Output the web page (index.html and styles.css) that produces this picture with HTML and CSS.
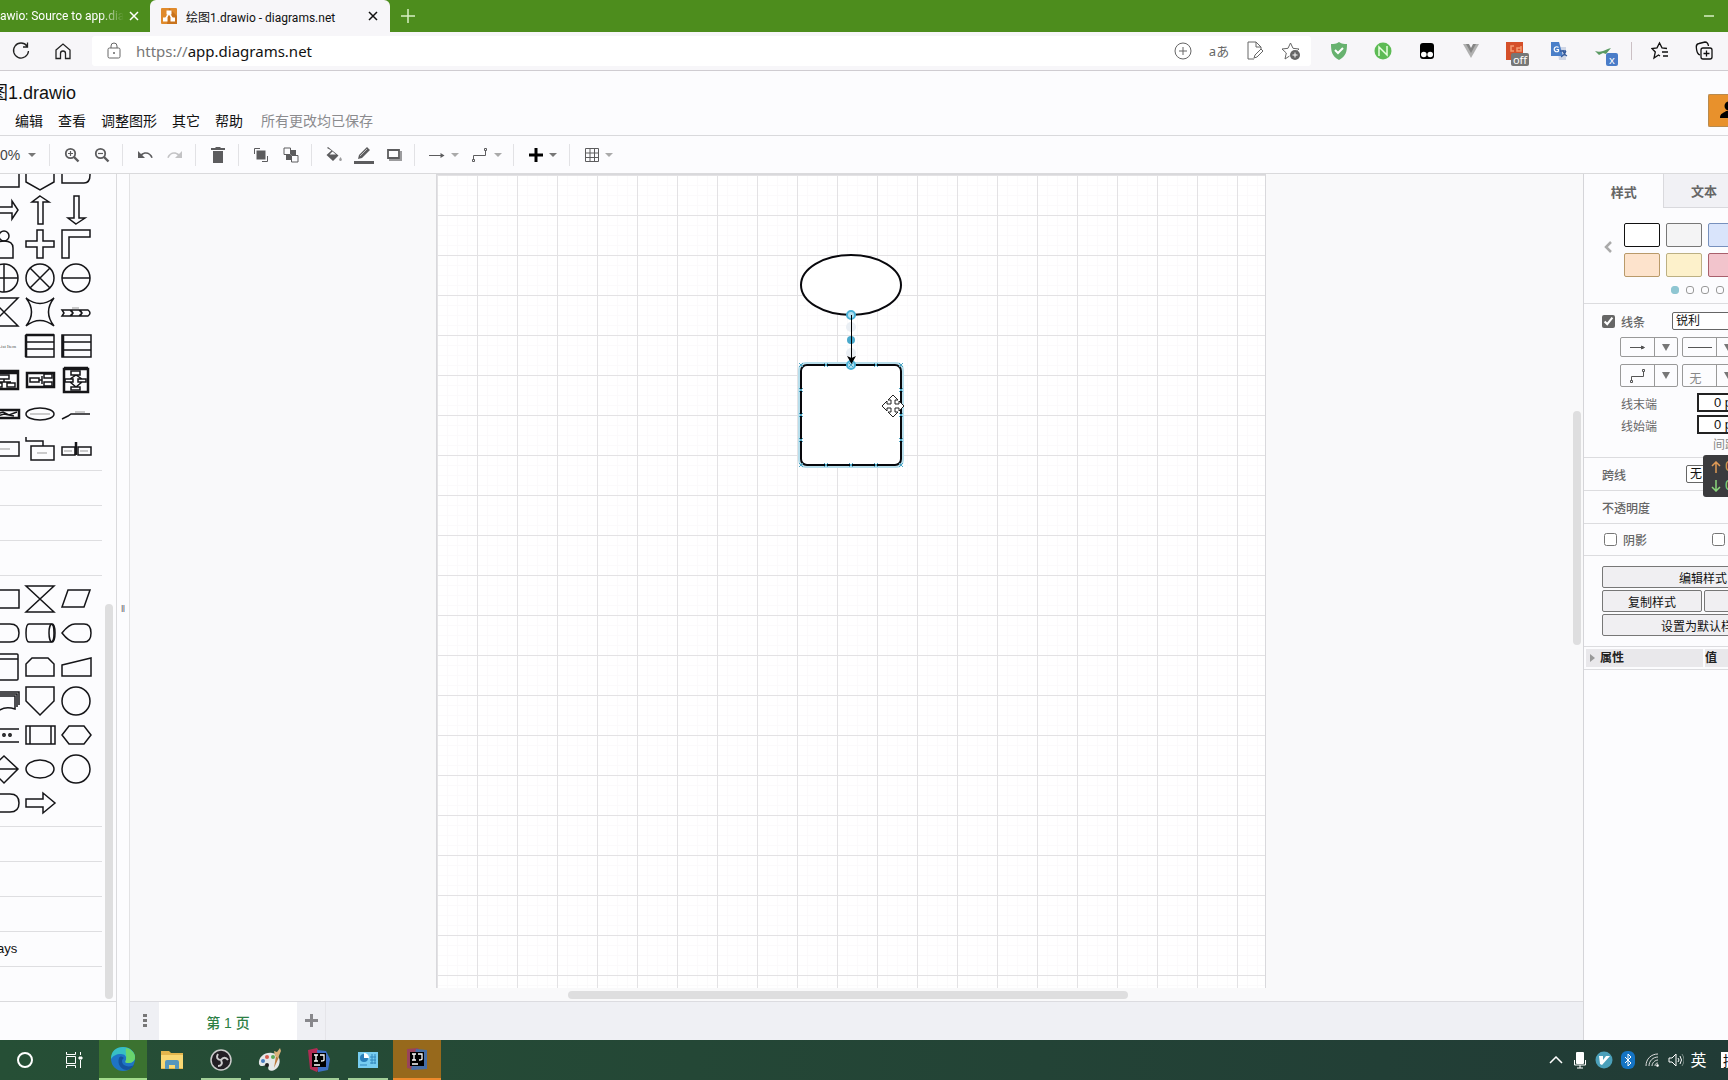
FILE: index.html
```html
<!DOCTYPE html>
<html lang="zh-CN">
<head>
    <meta charset="UTF-8">
    <meta name="viewport" content="width=device-width, initial-scale=1.0">
    <title>绘图1.drawio - diagrams.net</title>
    <link rel="stylesheet" href="styles.css">
</head>
<body>
    <!-- Browser tabs -->
    <div class="tab-strip">
        <div class="tab tab-old">
            <span class="tab-title">awio: Source to app.dia</span>
            <button class="tab-close" aria-label="Close tab"><svg width="10" height="10" viewBox="0 0 10 10"><path d="M1 1l8 8M9 1l-8 8"/></svg></button>
        </div>
        <div class="tab tab-current">
            <svg class="favicon" width="16" height="16" viewBox="0 0 16 16"><rect width="16" height="16" rx="1" fill="#e08a2c"/><path d="M8 0l8 8v8H6z" fill="#c9731d"/><path d="M8 5L4.500 11M8 5l3.500 6" stroke="#fff" stroke-width="1.500"/><path d="M5.500 2.500h5v4h-5zM2 9.500h4.500v4H2zM9.500 9.500H14v4H9.500z" fill="#fff"/></svg>
            <span class="tab-title">绘图1.drawio - diagrams.net</span>
            <button class="tab-close" aria-label="Close tab"><svg width="10" height="10" viewBox="0 0 10 10"><path d="M1 1l8 8M9 1l-8 8"/></svg></button>
        </div>
        <button class="tab-new" aria-label="New tab"><svg width="14" height="14" viewBox="0 0 14 14"><path d="M7 0v14M0 7h14"/></svg></button>
        <button class="minimize" aria-label="Minimize"><svg width="10" height="10" viewBox="0 0 10 10"><path d="M0 5h10"/></svg></button>
    </div>

    <!-- Address bar -->
    <div class="address-bar">
        <button class="nav-btn" aria-label="Reload"><svg width="20" height="20" viewBox="0 0 20 20"><path d="M16 5A7.500 7.500 0 1 0 17.500 10M16.500 1.500V6H12"/></svg></button>
        <button class="nav-btn" aria-label="Home"><svg width="18" height="18" viewBox="0 0 18 18"><path d="M2 8l7-6 7 6v8.500h-4.500V11.500a2.500 2.500 0 0 0-5 0v5H2z"/></svg></button>
        <div class="url-field">
            <svg width="14" height="18" viewBox="0 0 14 18"><rect x="1" y="6" width="12" height="10" rx="1.500"/><path d="M4 6V4a3 3 0 0 1 6 0v2"/><circle cx="7" cy="11" r="1" fill="#666" stroke="none"/></svg>
            <a class="url" href="#"><span>https://</span>app.diagrams.net</a>
            <button class="field-btn" aria-label="Zoom"><svg width="18" height="18" viewBox="0 0 18 18"><circle cx="9" cy="9" r="8"/><path d="M9 5v8M5 9h8"/></svg></button>
            <button class="field-btn read">aあ</button>
            <button class="field-btn" aria-label="Edit page"><svg width="18" height="20" viewBox="0 0 18 20"><path d="M8 18H2V1h8l5 5v2M10 1v5h5M8 17l1-3 6-6 2 2-6 6z"/></svg></button>
            <button class="field-btn" aria-label="Add favourite"><svg width="20" height="20" viewBox="0 0 20 20"><path d="M8.500 15L4 18l1.300-6L1 8l6-.700L9.500 2 12 7.300l6 .700-1.500 1.500"/><circle cx="14" cy="14" r="5" fill="#666" stroke="none"/><path d="M14 11.500v5M11.500 14h5" stroke="#fff"/></svg></button>
        </div>
        <div class="extensions">
            <button class="ext" aria-label="Shield"><svg width="18" height="20" viewBox="0 0 18 20"><path d="M9 1c3 2 5 2 8 2 0 8-1 12-8 16C2 15 1 11 1 3c3 0 5 0 8-2z" fill="#67b26f"/><path d="M5 9l3 3 5-5" fill="none" stroke="#fff" stroke-width="2"/></svg></button>
            <button class="ext" aria-label="N"><svg width="18" height="18" viewBox="0 0 18 18"><circle cx="9" cy="9" r="8.500" fill="#5dbb55"/><path d="M5 14V5l8 8V4" fill="none" stroke="#e8ffe0" stroke-width="1.500"/></svg></button>
            <button class="ext" aria-label="Script"><svg width="16" height="16" viewBox="0 0 16 16"><rect x="1" width="14" height="16" rx="3"/><circle cx="4.800" cy="11.500" r="2.800" fill="#fff"/><circle cx="11.200" cy="11.500" r="2.800" fill="#fff"/></svg></button>
            <button class="ext" aria-label="V"><svg width="16" height="16" viewBox="0 0 16 16"><path d="M0 1h16L8 15z" fill="#b0b0b0"/><path d="M3 1h10L8 10z" fill="#858585"/><path d="M6 1h4L8 5z" fill="#f7f6f9"/></svg></button>
            <button class="ext" aria-label="Blocker"><svg width="18" height="18" viewBox="0 0 18 18"><rect width="17" height="18" fill="#d5502a"/><path d="M8 4H5v5h3M15 4v5h-4V6h4" fill="none" stroke="#f49b72" stroke-width="1.500"/></svg><span class="badge badge-off">off</span></button>
            <button class="ext" aria-label="Translate"><svg width="18" height="18" viewBox="0 0 18 18"><path d="M7 5h9v13H9z" fill="#cfd6e6"/><path d="M1 0h8l4 14H1z" fill="#4a7fc9"/><path d="M8.500 5.500a2.500 2.500 0 1 0 0 3.500V7.500H6.500" fill="none" stroke="#fff" stroke-width="1.200"/><path d="M10 9h6M13 8v1c1 3 2 4 4 5m-1-5c-1 3-3 5-5 6" fill="none" stroke="#345a9c" stroke-width="1.300"/></svg></button>
            <button class="ext" aria-label="Glasses"><svg width="18" height="18" viewBox="0 0 18 18"><path d="M1 9c3 1 5 1 8 0 3-1 4-2 8-3l-5 6-3-1-4 2z" fill="#5a9a63"/></svg><span class="badge badge-x">x</span></button>
            <span class="ext-line"></span>
            <button class="ext dark" aria-label="Favourites"><svg width="18" height="20" viewBox="0 0 18 20"><path d="M9 15l-1.500-1L3 17l1.300-6L1 7.500l5-.700L8.500 2 11 6.800l5 .700M11 11h6M12 15h5"/></svg></button>
            <button class="ext dark" aria-label="Collections"><svg width="18" height="20" viewBox="0 0 18 20"><path d="M5 14c-3-1-3-3-3.500-6S1 3 4 2.500L10 1c2 0 3 1 3.500 4"/><rect x="6" y="7" width="11" height="11" rx="2"/><path d="M11.500 9.500v6M8.500 12.500h6"/></svg></button>
        </div>
    </div>

    <!-- Document title and menus -->
    <header class="header">
        <div class="doc">
            <h1 class="doc-title">图1.drawio</h1>
            <nav class="menus">
                <a href="#">编辑</a>
                <a href="#">查看</a>
                <a href="#">调整图形</a>
                <a href="#">其它</a>
                <a href="#">帮助</a>
                <span class="saved">所有更改均已保存</span>
            </nav>
        </div>
        <button class="share" aria-label="Share"><svg width="20" height="20" viewBox="0 0 20 20"><circle cx="10" cy="6" r="4.500"/><path d="M1 18c0-5 4-5 6-7h6c2 2 6 2 6 7z"/></svg></button>
    </header>

    <div class="toolbar">
        <button class="zoom-level">0%<i class="caret"></i></button>
        <span class="sep"></span>
        <button class="tool" aria-label="Zoom in"><svg width="16" height="16" viewBox="0 0 16 16"><g class="line"><circle cx="6.500" cy="6.500" r="4.700"/><path d="M10 10l4.500 4.500" stroke-width="2.400"/><path d="M6.500 4v5M4 6.500h5" stroke-width="1.200"/></g></svg></button>
        <button class="tool" aria-label="Zoom out"><svg width="16" height="16" viewBox="0 0 16 16"><g class="line"><circle cx="6.500" cy="6.500" r="4.700"/><path d="M10 10l4.500 4.500" stroke-width="2.400"/><path d="M4 6.500h5" stroke-width="1.200"/></g></svg></button>
        <span class="sep"></span>
        <button class="tool" aria-label="Undo"><svg width="16" height="16" viewBox="0 0 16 16"><path d="M1 4v7h7L5.300 8.300C9 5.500 12.500 7 14.300 11l1.500-.6C14 5.500 8.500 3.500 4 7z"/></svg></button>
        <button class="tool disabled" aria-label="Redo"><svg width="16" height="16" viewBox="0 0 16 16"><path d="M15 4v7H8l2.700-2.700C7 5.500 3.500 7 1.700 11l-1.500-.6C2 5.500 7.500 3.500 12 7z"/></svg></button>
        <span class="sep"></span>
        <button class="tool" aria-label="Delete"><svg width="16" height="16" viewBox="0 0 16 16"><path d="M1 1h4l1-1h4l1 1h4v2H1zM3 4h10v12H3z"/></svg></button>
        <span class="sep"></span>
        <button class="tool" aria-label="To front"><svg width="16" height="16" viewBox="0 0 16 16"><path d="M3.500 3.500h9v9h-9z"/><path class="thin" d="M1.500 7V1.500H7M14.500 9v5.500H9"/></svg></button>
        <button class="tool" aria-label="To back"><svg width="16" height="16" viewBox="0 0 16 16"><path d="M8 3h5v5H8zM3 8h5v5H3z"/><path class="thin" d="M1 1h6.500v6.500H1zM8.500 8.500H15V15H8.500z"/></svg></button>
        <span class="sep"></span>
        <button class="tool" aria-label="Fill colour"><svg width="18" height="16" viewBox="0 0 18 16"><path d="M3 0l10.500 8.500L8 14 1.500 8l5-4.500L2 1zM7.500 4.500L4.500 7.500h6.500z" fill-rule="evenodd"/><path d="M15.500 10c3 4 0 4 0 4s-3 0 0-4z" opacity=".6"/></svg></button>
        <button class="tool" aria-label="Line colour"><svg width="20" height="18" viewBox="0 0 20 18"><path d="M0 15h20v3H0zM4 13l1-4 8-8 3 3-8 8z"/><path d="M6 10l7-7" stroke="#fff" stroke-width=".6"/></svg></button>
        <button class="tool" aria-label="Shadow"><svg width="16" height="16" viewBox="0 0 16 16"><path d="M14 4h2v10H3v-2h11z" opacity=".6"/><path class="line" d="M2 3h11v8H2z"/></svg></button>
        <span class="sep"></span>
        <button class="tool menu" aria-label="Connection"><svg width="16" height="16" viewBox="0 0 16 16"><path class="thin" d="M0 8.500h15"/><path d="M11.500 6l4 2.500-4 2.500z"/></svg><i class="caret light"></i></button>
        <button class="tool menu" aria-label="Waypoints"><svg width="16" height="16" viewBox="0 0 16 16"><path class="thin" d="M1.500 12V8.500h12V4M0.500 12.500h2v2h-2zM12.500 1.500h2v2h-2z"/></svg><i class="caret light"></i></button>
        <span class="sep"></span>
        <button class="tool menu" aria-label="Insert"><svg width="14" height="14" viewBox="0 0 14 14"><path d="M5.500 0h3v5.500H14v3H8.500V14h-3V8.500H0v-3h5.500z" fill="#000"/></svg><i class="caret"></i></button>
        <span class="sep"></span>
        <button class="tool menu" aria-label="Table"><svg width="14" height="14" viewBox="0 0 14 14"><path class="thin" d="M.5.5h13v13H.5zM5 .5v13M9.500.5v13M.5 5h13M.5 9.500h13"/></svg><i class="caret light"></i></button>
    </div>

    <main class="main">
        <!-- Shape library -->
        <aside class="sidebar">
            <div class="library">
                <div class="palette palette-general">
                    <button class="shape"><svg viewBox="0 0 36 34"><path d="M4 8h29v20H4z"/></svg></button>
                    <button class="shape"><svg viewBox="0 0 36 34"><path d="M4 8h28v15l-14 8-14-8z"/></svg></button>
                    <button class="shape"><svg viewBox="0 0 36 34"><path d="M4 4h28v12q0 8-6 8H4z"/></svg></button>
                    <button class="shape"><svg viewBox="0 0 36 34"><path d="M4 14h22V8l6 9-6 9v-6H4z"/></svg></button>
                    <button class="shape"><svg viewBox="0 0 36 34"><path d="M18 3l9 6h-6v22h-5V9h-6z"/></svg></button>
                    <button class="shape"><svg viewBox="0 0 36 34"><path d="M18 31l9-6h-6V3h-5v22h-6z"/></svg></button>
                    <button class="shape"><svg viewBox="0 0 36 34"><circle cx="18" cy="9" r="5"/><path d="M9 31V21q0-7 9-7t9 7v10z"/></svg></button>
                    <button class="shape"><svg viewBox="0 0 36 34"><path d="M15 3h6v11h11v6H21v11h-6V20H4v-6h11z"/></svg></button>
                    <button class="shape"><svg viewBox="0 0 36 34"><path d="M4 3h28v7H11v21H4z"/></svg></button>
                    <button class="shape"><svg viewBox="0 0 36 34"><circle cx="18" cy="17" r="14"/><path d="M18 3v28M4 17h28"/></svg></button>
                    <button class="shape"><svg viewBox="0 0 36 34"><circle cx="18" cy="17" r="14"/><path d="M8 7l20 20M28 7L8 27"/></svg></button>
                    <button class="shape"><svg viewBox="0 0 36 34"><circle cx="18" cy="17" r="14"/><path d="M4 17h28"/></svg></button>
                    <button class="shape"><svg viewBox="0 0 36 34"><path d="M4 3h28L4 31h28z"/></svg></button>
                    <button class="shape"><svg viewBox="0 0 36 34"><path d="M4 3q14 11 28 0-11 14 0 28-14-11-28 0 11-14 0-28z"/></svg></button>
                    <button class="shape"><svg viewBox="0 0 36 34"><path d="M4 15h8l3 3-3 3H4l2-3zM13 15h8l3 3-3 3h-8l2-3zM22 15h8q4 3 0 6h-8l2-3z"/><path class="faint" d="M14 13h7"/></svg></button>
                    <button class="shape"><svg viewBox="0 0 36 34"><text x="12" y="19">List Item</text></svg></button>
                    <button class="shape"><svg viewBox="0 0 36 34"><path d="M4 6h28v22H4zM4 13h28M4 20h28" /><path class="bold" d="M4 6h28M4 6v22"/></svg></button>
                    <button class="shape"><svg viewBox="0 0 36 34"><path d="M4 6h29v22H4zM4 13h29M4 21h29"/><path class="bold" d="M5 6v22"/></svg></button>
                    <button class="shape"><svg viewBox="0 0 36 34"><path class="bold" d="M3 8h29v18H3zM3 10h29"/><path d="M13 12h10v4H13zM8 20h8v4H8zM21 20h8v4h-8zM18 16v3M11 19h14"/></svg></button>
                    <button class="shape"><svg viewBox="0 0 36 34"><path class="bold" d="M5 10h27v14H5z"/><path d="M8 15h9v4H8zM22 11h8v4h-8zM22 19h8v4h-8zM17 17h3M20 13v8"/></svg></button>
                    <button class="shape"><svg viewBox="0 0 36 34"><path class="bold" d="M6 6h24v23H6zM6 5h24"/><path d="M13 8h9v4h-9zM7 16h8v3H7zM20 16h8v3h-8zM13 24h9v3h-9zM18 12l-6 4M18 12l6 4M12 19l6 5M24 19l-6 5"/></svg></button>
                    <button class="shape"><svg viewBox="0 0 36 34"><path class="bold" d="M3 13h30v8H3z"/><path d="M3 17h8l6-2 6 3 8-3M12 19l6-2 10 2"/></svg></button>
                    <button class="shape"><svg viewBox="0 0 36 34"><ellipse cx="18" cy="17" rx="14" ry="6"/><path class="faint" d="M8 17h20"/></svg></button>
                    <button class="shape"><svg viewBox="0 0 36 34"><path d="M4 22l6-3 3-2h19"/><path class="faint" d="M17 15h10"/></svg></button>
                    <button class="shape"><svg viewBox="0 0 36 34"><path d="M4 11h29v14H4z"/><path class="faint" d="M13 18h11"/></svg></button>
                    <button class="shape"><svg viewBox="0 0 36 34"><path d="M4 6v4h17v5M9 15h23v14H9z"/><path class="faint" d="M15 22h10"/></svg></button>
                    <button class="shape"><svg viewBox="0 0 36 34"><path d="M4 16h13v8H4zM20 16h13v8H20z"/><path class="bold" d="M18 11v13"/><path class="faint" d="M6 20h8M22 20h8"/></svg></button>
                </div>
                <div class="section"></div>
                <div class="section"></div>
                <div class="section"></div>
                <div class="palette">
                    <button class="shape"><svg viewBox="0 0 36 34"><path d="M4 8h29v18H4z"/></svg></button>
                    <button class="shape"><svg viewBox="0 0 36 34"><path d="M4 4h28L4 30h28z"/></svg></button>
                    <button class="shape"><svg viewBox="0 0 36 34"><path d="M10 8h22l-6 17H4z"/></svg></button>
                    <button class="shape"><svg viewBox="0 0 36 34"><path d="M10 8h14q9 0 9 9t-9 9H10z"/></svg></button>
                    <button class="shape"><svg viewBox="0 0 36 34"><path d="M7 8h22q3 0 3 9t-3 9H7q-3 0-3-9t3-9z"/><ellipse cx="30" cy="17" rx="3" ry="9"/></svg></button>
                    <button class="shape"><svg viewBox="0 0 36 34"><path d="M4 17q7-9 13-9h9q7 0 7 9t-7 9h-9q-6 0-13-9z"/></svg></button>
                    <button class="shape"><svg viewBox="0 0 36 34"><rect x="4" y="4" width="28" height="26" rx="1"/><path d="M4 9h28"/></svg></button>
                    <button class="shape"><svg viewBox="0 0 36 34"><path d="M4 26V14l6-6h16l6 6v12z"/></svg></button>
                    <button class="shape"><svg viewBox="0 0 36 34"><path d="M4 15l29-7v18H4z"/></svg></button>
                    <button class="shape"><svg viewBox="0 0 36 34"><path d="M2 12h27v13q-9-3-15 1H2zM4 10h27v13M6 8h27v13"/></svg></button>
                    <button class="shape"><svg viewBox="0 0 36 34"><path d="M4 3h28v14l-14 14L4 17z"/></svg></button>
                    <button class="shape"><svg viewBox="0 0 36 34"><circle cx="18" cy="17" r="14"/></svg></button>
                    <button class="shape"><svg viewBox="0 0 36 34"><path d="M4 11h29M4 24h29"/><circle cx="18" cy="17" r="1.200"/><circle cx="24" cy="17" r="1.200"/></svg></button>
                    <button class="shape"><svg viewBox="0 0 36 34"><path d="M4 8h29v18H4zM8 8v18M29 8v18"/></svg></button>
                    <button class="shape"><svg viewBox="0 0 36 34"><path d="M4 17l7-9h15l7 9-7 9H11z"/></svg></button>
                    <button class="shape"><svg viewBox="0 0 36 34"><path d="M18 4l14 13-14 14L4 17zM4 17h28"/></svg></button>
                    <button class="shape"><svg viewBox="0 0 36 34"><ellipse cx="18" cy="17" rx="14" ry="9"/></svg></button>
                    <button class="shape"><svg viewBox="0 0 36 34"><circle cx="18" cy="17" r="14"/></svg></button>
                    <button class="shape"><svg viewBox="0 0 36 34"><path d="M10 8h14q9 0 9 9t-9 9H10z"/></svg></button>
                    <button class="shape"><svg viewBox="0 0 36 34"><path d="M4 13h17V7l12 10-12 10v-6H4z"/></svg></button>
                </div>
                <div class="section"></div>
                <div class="section"></div>
                <div class="section"></div>
                <div class="section">ays</div>
                <span class="scroll-thumb side-thumb"></span>
            </div>
            <div class="library-footer"></div>
        </aside>
        <div class="splitter">||</div>

        <!-- Drawing area -->
        <section class="editor">
            <div class="canvas">
                <div class="page">
                    <svg class="diagram" viewBox="1 1 830 814">
                        <rect class="glow" x="365" y="191" width="100" height="100" rx="5"/>
                        <ellipse class="node" cx="415" cy="111" rx="50" ry="30"/>
                        <rect class="node" x="365" y="191" width="100" height="100" rx="6"/>
                        <circle class="handle-faint" cx="415" cy="153" r="5"/>
                        <circle class="handle-faint" cx="415" cy="179" r="5"/>
                        <circle class="handle-end" cx="415" cy="141" r="4"/>
                        <circle class="handle-end" cx="415" cy="191" r="4"/>
                        <circle class="handle" cx="415" cy="166" r="4"/>
                        <path class="edge" d="M415.500 141v46"/>
                        <path d="M411 182l4.500 2 4.500-2-4.500 8z"/>
                        <path class="points" d="M363 189l4 4m0-4l-4 4M388 189l4 4m0-4l-4 4M413 189l4 4m0-4l-4 4M438 189l4 4m0-4l-4 4M463 189l4 4m0-4l-4 4M363 214l4 4m0-4l-4 4M463 214l4 4m0-4l-4 4M363 239l4 4m0-4l-4 4M463 239l4 4m0-4l-4 4M363 264l4 4m0-4l-4 4M463 264l4 4m0-4l-4 4M363 289l4 4m0-4l-4 4M388 289l4 4m0-4l-4 4M413 289l4 4m0-4l-4 4M438 289l4 4m0-4l-4 4M463 289l4 4m0-4l-4 4"/>
                        <path class="cursor" d="M457 221l5 5h-3v4h4v-3l5 5-5 5v-3h-4v4h3l-5 5-5-5h3v-4h-4v3l-5-5 5-5v3h4v-4h-3z"/>
                    </svg>
                </div>
                <span class="scroll-thumb canvas-v"></span>
                <span class="scroll-thumb canvas-h"></span>
            </div>
            <div class="page-tabs">
                <button class="pages-menu" aria-label="Pages"><svg width="4" height="14" viewBox="0 0 4 14"><path d="M0 0h4v3H0zM0 5h4v3H0zM0 10h4v3H0z"/></svg></button>
                <button class="page-tab">第 1 页</button>
                <button class="page-add" aria-label="Add page"><svg width="13" height="13" viewBox="0 0 13 13"><path d="M5 0h3v5h5v3H8v5H5V8H0V5h5z"/></svg></button>
            </div>
        </section>

        <!-- Format panel -->
        <aside class="format">
            <div class="format-inner">
                <div class="format-tabs">
                    <button class="format-tab selected">样式</button>
                    <button class="format-tab">文本</button>
                    <button class="format-tab"></button>
                </div>
                <div class="block presets">
                    <button class="prev" aria-label="Previous"><svg width="8" height="12" viewBox="0 0 8 12"><path d="M7 1L2 6l5 5"/></svg></button>
                    <div class="swatches">
                        <button class="swatch white"></button>
                        <button class="swatch grey"></button>
                        <button class="swatch blue"></button>
                        <button class="swatch orange"></button>
                        <button class="swatch yellow"></button>
                        <button class="swatch red"></button>
                    </div>
                    <div class="dots"><i class="on"></i><i></i><i></i><i></i></div>
                </div>
                <div class="block line-block">
                    <div class="row line-head">
                        <input type="checkbox" id="line" checked>
                        <label for="line">线条</label>
                        <select class="sharp" aria-label="Line style"><option>锐利</option></select>
                    </div>
                    <div class="row pair">
                        <button class="combo"><span><svg width="16" height="9" viewBox="0 0 16 9"><path d="M0 4.500h14M11.500 3L14.500 4.500 11.500 6z"/></svg></span><i></i></button>
                        <button class="combo"><span><svg width="24" height="9" viewBox="0 0 24 9"><path d="M0 4.500h24"/></svg></span><i></i></button>
                    </div>
                    <div class="row pair tall">
                        <button class="combo"><span><svg width="16" height="16" viewBox="0 0 16 16"><path d="M1.500 12V8.500h12V4M.5 12.500h2v2h-2zM12.500 1.500h2v2h-2z" fill="none"/></svg></span><i></i></button>
                        <button class="combo"><span class="none">无</span><i></i></button>
                    </div>
                    <div class="row end-row"><label for="line-end">线末端</label><input type="text" id="line-end" value="0 pt"></div>
                    <div class="row end-row"><label for="line-start">线始端</label><input type="text" id="line-start" value="0 pt"></div>
                    <div class="spacing">间距</div>
                </div>
                <div class="block row jump"><label for="jump">跨线</label><select id="jump"><option>无</option></select></div>
                <div class="block row opacity">不透明度</div>
                <div class="block row effects">
                    <input type="checkbox" id="shadow"><label for="shadow">阴影</label>
                    <input type="checkbox" id="sketch" aria-label="Sketch">
                </div>
                <div class="block actions">
                    <button class="wide">编辑样式</button>
                    <button>复制样式</button>
                    <button></button>
                    <button class="wide">设置为默认样式</button>
                </div>
                <table class="props">
                    <tr><th class="name"><i></i>属性</th><th>值</th></tr>
                </table>
            </div>
            <div class="net-speed">
                <span class="up"><svg width="10" height="12" viewBox="0 0 10 12"><path d="M5 12V1M1 5l4-4 4 4"/></svg>0</span>
                <span class="down"><svg width="10" height="12" viewBox="0 0 10 12"><path d="M5 0v11M1 7l4 4 4-4"/></svg>0</span>
            </div>
        </aside>
    </main>

    <!-- Windows taskbar -->
    <footer class="taskbar">
        <button class="task" aria-label="Cortana"><svg width="18" height="18" viewBox="0 0 18 18"><circle cx="9" cy="9" r="7" fill="none" stroke="#fff" stroke-width="2"/></svg></button>
        <button class="task" aria-label="Task view"><svg width="18" height="16" viewBox="0 0 18 16" fill="none" stroke="#fff"><path d="M1.500 0v2.500h9V0M1.500 16v-2.500h9V16M1.500 4.500h9v7h-9zM15.500 0v3M15.500 8v8"/><path d="M14 5h3v2h-3z" fill="#fff"/></svg></button>
        <button class="task focused" aria-label="Edge"><svg width="24" height="24" viewBox="0 0 24 24"><circle cx="12" cy="12" r="12" fill="#1e74c5"/><path d="M0 12C0 4 5 0 12 0c7 0 12 5 12 10 0 4-3 6-7 6-3 0-3-1-2-3 1-3-1-6-5-6-5 0-8 2-10 5z" fill="#37bfc4"/><path d="M15 1c5 1 9 5 9 9 0 4-3 6-7 6-3 0-3-1-2-3 1-4-1-8 0-12z" fill="#69d56c"/><path d="M8 11c-2 6 2 12 8 12 3 0 6-3 7-5-5 3-12 1-12-4 0-2 2-3 2-3-2-2-4-2-5 0z" fill="#15539e"/></svg></button>
        <button class="task" aria-label="Explorer"><svg width="22" height="18" viewBox="0 0 22 18"><path d="M0 0h8l2 2h12v16H0z" fill="#e3b64d"/><path d="M0 4h22v13H0z" fill="#f9d873"/><path d="M4 18v-7q0-2 2-2h10q2 0 2 2v7h-4v-4H8v4z" fill="#5596bd"/></svg></button>
        <button class="task open" aria-label="OBS"><svg width="22" height="22" viewBox="0 0 22 22"><circle cx="11" cy="11" r="10" fill="#231f24" stroke="#ccc" stroke-width="1.500"/><path d="M11 11c-4 0-5-3-3-6M11 11c2-3 5-3 7 0M11 11c2 4 0 6-3 6" fill="none" stroke="#ccc" stroke-width="2"/></svg></button>
        <button class="task open" aria-label="Paint"><svg width="24" height="24" viewBox="0 0 24 24"><path d="M1 16C0 9 7 4 14 5s9 7 7 12-8 7-10 5 1-5-2-5-6 3-8-1z" fill="#e4e7e8"/><circle cx="5" cy="13" r="2" fill="#477dc0"/><circle cx="9" cy="9" r="2" fill="#d65d4e"/><circle cx="15" cy="9" r="2" fill="#5ba95a"/><circle cx="9" cy="17" r="2" fill="#222"/><path d="M16 20l2-12 3 1z" fill="#bd7b3d"/><path d="M17 8l-1-5 3 1 3-4 1 3-3 7z" fill="#d9b17a"/></svg></button>
        <button class="task open" aria-label="IntelliJ IDEA"><svg width="24" height="24" viewBox="0 0 24 24"><path d="M1 2l9-2 6 10-6 14-7-3z" fill="#b02c54"/><path d="M10 2l9 1 4 8-2 11-10 2z" fill="#3d6fc4"/><path d="M5 5h14v14H5z"/><path d="M7 7h4M9 7v6M7 13h4M13 7h4v5q0 1-3 1M7 17h6" fill="none" stroke="#fff" stroke-width="1.300"/></svg></button>
        <button class="task open" aria-label="Control panel"><svg width="20" height="16" viewBox="0 0 20 16"><path d="M0 0h20v16H0z" fill="#77cdf0"/><circle cx="6" cy="6" r="4" fill="#287eb8"/><path d="M6 6V1a5 5 0 0 1 5 5z" fill="#fff"/><path d="M12 5h6M12 8h6M12 11h6M14 2v10M17 2v10M2 13h7" stroke="#3288bd"/></svg></button>
        <button class="task active" aria-label="IntelliJ IDEA"><svg width="24" height="24" viewBox="0 0 24 24"><path d="M2 2l11-1 6 10-8 12-9-2z" fill="#98435b"/><path d="M11 2l11 1v19l-16 1z" fill="#476ea5"/><path d="M5 5h14v14H5z"/><path d="M7 7h4M9 7v6M7 13h4M13 7h4v5q0 1-3 1M7 17h6" fill="none" stroke="#fff" stroke-width="1.300"/></svg></button>
        <div class="tray">
            <button aria-label="Hidden icons"><svg width="14" height="8" viewBox="0 0 14 8"><path d="M1 7l6-6 6 6" fill="none" stroke="#fff" stroke-width="1.500"/></svg></button>
            <button aria-label="Microphone"><svg width="12" height="18" viewBox="0 0 12 18"><rect x="2" y="1" width="8" height="12" rx="1" fill="#fff"/><path d="M.5 9v5h11V9M6 14v3M3 17h6" fill="none" stroke="#fff"/></svg></button>
            <button aria-label="V"><svg width="18" height="18" viewBox="0 0 18 18"><circle cx="9" cy="9" r="8.500" fill="#4ba0ba"/><path d="M4 5h4v4l3-4h4l-8 9-2-1z" fill="#fff"/></svg></button>
            <button aria-label="Bluetooth"><svg width="14" height="18" viewBox="0 0 14 18"><rect width="14" height="18" rx="6" fill="#1474c4"/><path d="M4 6l6 6-3 3V3l3 3-6 6" fill="none" stroke="#fff"/></svg></button>
            <button aria-label="Network"><svg width="14" height="14" viewBox="0 0 14 14" fill="none" stroke="#ddd"><path d="M1 13C1 6 6 1 13 1M4 13c0-5 4-9 9-9M7 13c0-3 3-6 6-6M10 13c0-2 1-3 3-3"/><circle cx="12.500" cy="12.500" r="1" fill="#fff"/></svg></button>
            <button aria-label="Volume"><svg width="16" height="14" viewBox="0 0 16 14" fill="none" stroke="#fff"><path d="M1 5h3l4-4v12L4 9H1zM10 5q2 2 0 4M12 3q3 4 0 8"/><path d="M14 1q4 6 0 12" opacity=".4"/></svg></button>
            <button class="lang">英</button>
            <button class="ime">拼</button>
        </div>
    </footer>
</body>
</html>
```

FILE: styles.css
```css
* {
    box-sizing: border-box;
}
body {
    margin: 0;
    height: 100vh;
    display: flex;
    flex-direction: column;
    overflow: hidden;
    background: #fcfcfe;
    color: #111;
    font-family: "Liberation Sans", "Noto Sans CJK SC", sans-serif;
    font-size: 12px;
}
button {
    display: flex;
    align-items: center;
    justify-content: center;
    padding: 0;
    border: none;
    background: none;
    color: inherit;
    font: inherit;
}
a {
    color: inherit;
    text-decoration: none;
}
svg {
    display: block;
    flex: none;
}
i {
    font-style: normal;
}

/* Browser tabs */
.tab-strip {
    flex: none;
    display: flex;
    height: 32px;
    background: #4d8d1d;
    font-family: Roboto, "Noto Sans CJK SC", sans-serif;
}
.tab {
    display: flex;
    align-items: center;
    white-space: nowrap;
}
.tab-old {
    width: 150px;
    padding-right: 11px;
    color: #fff;
}
.tab-old .tab-title {
    flex: 1;
    overflow: hidden;
    mask-image: linear-gradient(to right, #000 100px, transparent 124px);
}
.tab-current {
    width: 240px;
    padding: 0 12px 0 11px;
    gap: 9px;
    background: #f7f6f9;
    border-radius: 6px 6px 0 0;
}
.tab-current .tab-title {
    flex: 1;
}
.tab-close svg {
    stroke: currentColor;
    stroke-width: 1.5;
}
.tab-new {
    width: 36px;
}
.tab-new svg,
.minimize svg {
    stroke: #d8f0c4;
    stroke-width: 1.5;
}
.minimize {
    margin-left: auto;
    width: 38px;
}

/* Address bar */
.address-bar {
    flex: none;
    display: flex;
    align-items: center;
    height: 39px;
    padding-bottom: 1px;
    background: #f7f6f9;
    border-bottom: 1px solid #cfccd1;
    font-family: "Noto Sans", "Noto Sans CJK SC", sans-serif;
}
.nav-btn {
    width: 42px;
    stroke: #222;
    stroke-width: 1.3;
    fill: none;
}
.url-field {
    flex: 1;
    display: flex;
    align-items: center;
    height: 30px;
    margin-left: 8px;
    padding: 0 2px 0 15px;
    background: #fff;
    border-radius: 3px;
    stroke: #666;
    fill: none;
}
.url {
    flex: 1;
    margin-left: 15px;
    font-size: 15px;
}
.url span {
    color: #777;
}
.field-btn {
    width: 36px;
    color: #666;
}
.read {
    font-size: 13px;
}
.extensions {
    display: flex;
    align-items: center;
    padding: 0 2px 0 6px;
}
.ext {
    position: relative;
    width: 44px;
}
.badge {
    position: absolute;
    left: 18px;
    top: 11px;
    border-radius: 2px;
    color: #fff;
    font-size: 11px;
    line-height: 13px;
}
.badge-off {
    width: 18px;
    background: #777;
}
.badge-x {
    left: 25px;
    width: 12px;
    background: #4a7cc8;
}
.ext-line {
    width: 1px;
    height: 18px;
    margin: 0 6px;
    background: #cbc0c4;
}
.dark svg {
    fill: none;
    stroke: #111;
    stroke-width: 1.3;
}

/* Title and menus */
.header {
    flex: none;
    display: flex;
    align-items: center;
    justify-content: space-between;
    height: 65px;
    border-bottom: 1px solid #d9d9dc;
    overflow: hidden;
}
.doc {
    padding-top: 6px;
}
.doc-title {
    margin: 0 0 6px -10px;
    font-size: 18px;
    font-weight: normal;
    line-height: 24px;
    white-space: nowrap;
}
.menus {
    display: flex;
    gap: 15px;
    padding-left: 15px;
    font-size: 14px;
    line-height: 20px;
}
.saved {
    margin-left: 3px;
    color: #8b8b8e;
}
.share {
    width: 20px;
    height: 33px;
    margin-top: 14px;
    padding-left: 10px;
    justify-content: flex-start;
    background: #e8912c;
    border: 1px solid #b98a4d;
    border-right: none;
    border-radius: 2px 0 0 2px;
}

/* Toolbar */
.toolbar {
    flex: none;
    display: flex;
    align-items: center;
    height: 38px;
    border-bottom: 1px solid #dadadc;
    color: #444;
}
.zoom-level {
    width: 44px;
    gap: 8px;
    justify-content: flex-start;
    font-size: 14px;
}
.caret {
    border: 4px solid transparent;
    border-top-color: #777;
    border-bottom: none;
}
.caret.light {
    border-top-color: #aaa;
}
.sep {
    width: 1px;
    height: 22px;
    margin: 0 7px 0 5px;
    background: #e2e2e5;
}
.tool {
    width: 30px;
    height: 30px;
    fill: #5c5c5e;
}
.tool .line {
    fill: none;
    stroke: #5c5c5e;
    stroke-width: 1.8;
}
.tool .thin {
    fill: none;
    stroke: #5c5c5e;
}
.disabled {
    opacity: 0.35;
}
.menu {
    width: 43px;
    gap: 6px;
}

/* Main area */
.main {
    flex: 1;
    display: flex;
    min-height: 0;
}
.sidebar {
    flex: none;
    display: flex;
    flex-direction: column;
    width: 117px;
    border-right: 1px solid #dadadd;
}
.library {
    position: relative;
    flex: 1;
    min-height: 0;
    overflow: hidden;
    border-bottom: 1px solid #dadadd;
}
.palette {
    display: grid;
    grid-template-columns: repeat(3, 36px);
    width: 102px;
    padding: 6px 0;
    border-bottom: 1px solid #dedee1;
    overflow: hidden;
}
.palette .shape {
    width: 36px;
    height: 34px;
    margin-left: -14px;
}
.palette-general {
    margin-top: -15px;
    padding: 0 0 5px;
}
.shape svg {
    width: 36px;
    height: 34px;
    fill: none;
    stroke: #151518;
    stroke-width: 1.5;
}
.shape .bold {
    stroke-width: 2.5;
}
.shape .faint {
    stroke: #999;
    stroke-width: 1;
}
.shape text {
    fill: #555;
    stroke: none;
    font-family: "Liberation Serif", serif;
    font-size: 5px;
}
.section {
    width: 102px;
    height: 35px;
    border-bottom: 1px solid #dedee1;
    font-size: 13px;
    line-height: 34px;
    text-indent: -3px;
}
.library-footer {
    flex: none;
    height: 38px;
}
.scroll-thumb {
    position: absolute;
    border-radius: 4px;
    background: #dededf;
}
.side-thumb {
    right: 3px;
    bottom: 2px;
    width: 8px;
    height: 395px;
}
.splitter {
    flex: none;
    display: flex;
    align-items: center;
    justify-content: center;
    width: 13px;
    border-right: 1px solid #e2e2e4;
    font-size: 7px;
}
.editor {
    flex: 1;
    display: flex;
    flex-direction: column;
    min-width: 0;
}
.canvas {
    position: relative;
    flex: 1;
    display: flex;
    justify-content: center;
    min-height: 0;
    padding: 0 12px 13px 0;
    background: #f9f9fa;
    border-bottom: 1px solid #dcdce0;
}
.page {
    flex: none;
    width: 830px;
    overflow: hidden;
    border: 1px solid #d9d9dc;
    border-bottom: none;
    background-color: #fff;
    background-image:
        linear-gradient(#e3e2e4 1px, transparent 1px),
        linear-gradient(90deg, #e3e2e4 1px, transparent 1px),
        linear-gradient(#fbfafb 1px, transparent 1px),
        linear-gradient(90deg, #fbfafb 1px, transparent 1px);
    background-size: 40px 40px, 40px 40px, 10px 10px, 10px 10px;
}
.diagram {
    width: 830px;
    height: 814px;
}
.node {
    fill: #fff;
    stroke: #08080c;
    stroke-width: 2;
}
.glow {
    fill: none;
    stroke: #b9dfec;
    stroke-width: 6;
}
.edge {
    stroke: #000;
    stroke-width: 1;
}
.handle {
    fill: #49a9cc;
}
.handle-end {
    fill: #b3e0f0;
    stroke: #49b1d6;
    stroke-width: 2;
}
.handle-faint {
    fill: #eaeff4;
}
.points {
    stroke: #4ba5c4;
}
.cursor {
    fill: #fff;
    stroke: #222;
}
.canvas-v {
    right: 2px;
    top: 237px;
    width: 8px;
    height: 234px;
}
.canvas-h {
    left: 438px;
    bottom: 2px;
    width: 560px;
    height: 8px;
}
.page-tabs {
    flex: none;
    display: flex;
    height: 38px;
    background: #eff0f4;
}
.pages-menu {
    width: 29px;
    fill: #777;
}
.page-tab {
    width: 138px;
    padding-top: 2px;
    background: #fff;
    color: #2c8044;
    font-size: 14px;
    font-weight: 500;
}
.page-add {
    width: 29px;
    padding-bottom: 2px;
    border-right: 1px solid #e5e5e9;
    fill: #88888c;
}

/* Format panel */
.format {
    position: relative;
    flex: none;
    width: 145px;
    overflow: hidden;
    border-left: 1px solid #d5d5d9;
    color: #666;
}
.format-inner {
    width: 240px;
}
.format-tabs {
    display: flex;
    height: 34px;
}
.format-tab {
    width: 81px;
    background: #f1f1f5;
    border-left: 1px solid #d9d9dd;
    border-bottom: 1px solid #d9d9dd;
    font-size: 13px;
    font-weight: bold;
}
.format-tab.selected {
    width: 80px;
    background: none;
    border: none;
}
.block {
    border-bottom: 1px solid #dcdcdf;
}
.row {
    display: flex;
    align-items: center;
}
.presets {
    display: grid;
    grid-template-columns: 40px 120px;
    align-content: start;
    height: 96px;
    padding-top: 15px;
}
.prev {
    padding: 0 0 6px 8px;
}
.prev svg {
    fill: none;
    stroke: #aaa;
    stroke-width: 2.5;
}
.swatches {
    display: grid;
    grid-template-columns: repeat(3, 36px);
    gap: 6px;
}
.swatch {
    height: 24px;
    border: 1px solid #777;
    border-radius: 2px;
}
.white {
    background: #fff;
    border-color: #111;
}
.grey {
    background: #f4f4f5;
}
.blue {
    background: #d9e4fb;
    border-color: #7790bd;
}
.orange {
    background: #fde3cc;
    border-color: #b99a6a;
}
.yellow {
    background: #fdf1cb;
    border-color: #bcb083;
}
.red {
    background: #f2c4cc;
    border-color: #a8606c;
}
.dots {
    grid-column: 2;
    display: flex;
    justify-content: center;
    gap: 7px;
    padding: 9px 0 0 27px;
}
.dots i {
    width: 8px;
    height: 8px;
    border: 1px solid #999;
    border-radius: 3px;
}
.dots .on {
    background: #8fc6d2;
    border-color: #8fc6d2;
}
input[type="checkbox"] {
    width: 13px;
    height: 13px;
    margin: 0;
    accent-color: #666;
}
select {
    height: 18px;
    padding: 0 3px;
    border: 1px solid #666;
    border-radius: 2px;
    background: #fff;
    color: #111;
    font: inherit;
    line-height: 16px;
    appearance: none;
}
.line-block {
    height: 154px;
    padding: 8px 0 0 18px;
}
.line-head label {
    width: 57px;
    padding-left: 6px;
    font-weight: 500;
}
.sharp {
    width: 100px;
}
.pair {
    gap: 4px;
    margin: 7px 0 0 18px;
}
.combo {
    width: 58px;
    height: 20px;
    border: 1px solid #999;
    border-radius: 2px;
    stroke: #555;
    fill: #555;
}
.tall .combo {
    height: 23px;
}
.combo span {
    display: flex;
    align-items: center;
    justify-content: center;
    width: 34px;
    height: 100%;
    border-right: 1px solid #999;
}
.combo .none {
    padding: 3px 8px 0 0;
    color: #888;
}
.combo i {
    margin: 0 auto;
    border: 4px solid transparent;
    border-top: 7px solid #777;
    border-bottom: none;
}
.end-row {
    height: 22px;
    padding-left: 19px;
}
.pair.tall + .end-row {
    margin-top: 4px;
}
.end-row label {
    width: 76px;
    padding-top: 2px;
}
.end-row input {
    width: 50px;
    height: 19px;
    padding: 0 0 0 15px;
    border: 2px solid #222;
    background: #fff;
    color: #111;
    font: inherit;
    font-size: 13px;
}
.spacing {
    padding-left: 111px;
    color: #888;
}
.jump {
    height: 33px;
    padding-left: 18px;
}
.jump label {
    width: 84px;
    font-weight: 500;
}
.jump select {
    width: 80px;
}
.opacity {
    height: 33px;
    padding-left: 18px;
    font-weight: 500;
}
.effects {
    height: 32px;
    padding-left: 20px;
}
.effects label {
    width: 95px;
    padding-left: 6px;
    font-weight: 500;
}
.actions {
    display: grid;
    grid-template-columns: 100px 100px;
    gap: 2px;
    height: 91px;
    padding: 10px 0 10px 18px;
}
.actions button {
    border: 1px solid #777;
    border-radius: 2px;
    background: #f0eff2;
    color: #111;
}
.actions .wide {
    grid-column: span 2;
}
.props {
    width: 100%;
    border-spacing: 2px;
    border-bottom: 1px solid #dcdcdf;
    color: #222;
    text-align: left;
}
.props th {
    height: 18px;
    padding: 0;
    background: #e9e8eb;
    line-height: 18px;
}
.props .name {
    width: 117px;
}
.props i {
    display: inline-block;
    margin: 0 5px 0 4px;
    border: 4px solid transparent;
    border-left: 5px solid #999;
    border-right: none;
}
.net-speed {
    position: absolute;
    left: 119px;
    top: 281px;
    width: 60px;
    padding: 2px 8px;
    border-radius: 3px;
    background: #3b3b3e;
    font-size: 14px;
    line-height: 19px;
}
.net-speed span {
    display: flex;
    align-items: center;
    gap: 4px;
}
.net-speed svg {
    fill: none;
    stroke: currentColor;
    stroke-width: 1.5;
}
.up {
    color: #e09a55;
}
.down {
    color: #8bd67c;
}

/* Taskbar */
.taskbar {
    flex: none;
    display: flex;
    gap: 1px;
    height: 40px;
    padding-left: 1px;
    overflow: hidden;
    background: linear-gradient(to right, #264f36, #213b36);
}
.task {
    width: 48px;
    height: 40px;
}
.focused {
    background: #3b7230;
    border-bottom: 2px solid #a2dc8b;
}
.open {
    background: linear-gradient(#a2cf98, #a2cf98) center bottom / 40px 2px no-repeat;
}
.active {
    background: #97691c;
    border-bottom: 2px solid #ef8a2c;
}
.tray {
    display: flex;
    width: 184px;
    margin-left: auto;
    color: #fff;
    font-family: "Noto Sans CJK SC", sans-serif;
}
.tray button {
    flex: none;
    width: 24px;
}
.tray .lang {
    margin-right: 9px;
    padding: 0 3px 2px 0;
    font-size: 16px;
}
.tray .ime {
    align-self: center;
    width: 18px;
    height: 16px;
    background: #fff;
    color: #111;
    font-size: 14px;
}
```
